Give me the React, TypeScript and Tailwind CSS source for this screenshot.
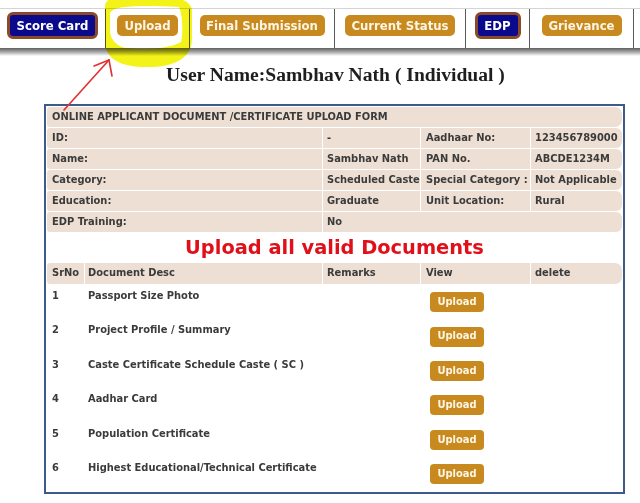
import React from "react";

const navCells = [
  { w: "w-[106px]", label: "Score Card", kind: "navy", bw: "w-[91px]" },
  { w: "w-[84px]", label: "Upload", kind: "gold", bw: "w-[61px]" },
  { w: "w-[145px]", label: "Final Submission", kind: "gold", bw: "w-[125px]" },
  { w: "w-[131px]", label: "Current Status", kind: "gold", bw: "w-[110px]" },
  { w: "w-[64px]", label: "EDP", kind: "navy", bw: "w-[46px]" },
  { w: "w-[104px]", label: "Grievance", kind: "gold", bw: "w-[80px]" },
];

const info = [
  ["ID:", "-", "Aadhaar No:", "123456789000"],
  ["Name:", "Sambhav Nath", "PAN No.", "ABCDE1234M"],
  ["Category:", "Scheduled Caste", "Special Category :", "Not Applicable"],
  ["Education:", "Graduate", "Unit Location:", "Rural"],
];

const docs = [
  "Passport Size Photo",
  "Project Profile / Summary",
  "Caste Certificate Schedule Caste ( SC )",
  "Aadhar Card",
  "Population Certificate",
  "Highest Educational/Technical Certificate",
];

function NavButton({ label, kind, bw }: { label: string; kind: string; bw: string }) {
  if (kind === "navy") {
    return (
      <div
        className={`${bw} flex h-[27px] items-center justify-center whitespace-nowrap rounded-[6px] border-[3px] border-[#8a4a2a] bg-[#0c0a8c] text-[13px] font-bold text-white`}
      >
        {label}
      </div>
    );
  }
  return (
    <div
      className={`${bw} flex h-[21px] items-center justify-center whitespace-nowrap rounded-[5px] bg-[#c88a1e] text-[13px] font-bold text-[#fdf6e6]`}
    >
      {label}
    </div>
  );
}

export default function App() {
  return (
    <div className="relative h-[503px] w-[640px] overflow-hidden bg-white font-['DejaVu_Sans_Condensed','DejaVu_Sans',sans-serif] text-[#3b3b3b]">
      <div className="h-[8px]" />

      {/* top menu */}
      <div className="flex h-[40px] border-t border-[#d4d4d4]">
        {navCells.map((c) => (
          <div
            key={c.label}
            className={`${c.w} flex items-center justify-center border-r border-[#5a5a5a] pb-[6px]`}
          >
            <NavButton label={c.label} kind={c.kind} bw={c.bw} />
          </div>
        ))}
      </div>
      <div className="h-[8px] bg-gradient-to-b from-[#5f5f5f] via-[#a8a8a8] to-white" />

      <div className="mt-[8px] pl-[31px] text-center font-['Liberation_Serif',serif] text-[19.6px] font-bold leading-[22px] text-[#1e1e1e]">
        User Name:Sambhav Nath ( Individual )
      </div>

      {/* form box */}
      <div className="ml-[44px] mt-[18px] w-[581px] border-2 border-[#3e5a8a] p-px text-[11px] font-bold">
        <div className="flex h-[20px] items-center rounded-l-[3px] rounded-r-[7px] bg-[#eddfd3] pl-[5px]">
          ONLINE APPLICANT DOCUMENT /CERTIFICATE UPLOAD FORM
        </div>

        {info.map((r) => (
          <div key={r[0]} className="mt-px grid h-[20px] grid-cols-[275px_97px_109px_91px] gap-x-px">
            <div className="flex items-center rounded-l-[3px] bg-[#eddfd3] pl-[5px]">{r[0]}</div>
            <div className="flex items-center whitespace-nowrap bg-[#eddfd3] pl-[4px]">{r[1]}</div>
            <div className="flex items-center whitespace-nowrap bg-[#eddfd3] pl-[5px]">{r[2]}</div>
            <div className="flex items-center whitespace-nowrap rounded-r-[6px] bg-[#eddfd3] pl-[4px]">{r[3]}</div>
          </div>
        ))}
        <div className="mt-px grid h-[20px] grid-cols-[275px_1fr] gap-x-px">
          <div className="flex items-center rounded-l-[3px] bg-[#eddfd3] pl-[5px]">EDP Training:</div>
          <div className="flex items-center rounded-r-[6px] bg-[#eddfd3] pl-[4px]">No</div>
        </div>

        <div className="flex h-[31px] items-center justify-center pt-px font-['DejaVu_Sans',sans-serif] text-[19.4px] font-bold text-[#e0101a]">
          Upload all valid Documents
        </div>

        <div className="grid h-[21px] grid-cols-[37px_237px_97px_109px_91px] gap-x-px">
          <div className="flex items-center rounded-l-[3px] bg-[#eddfd3] pl-[5px]">SrNo</div>
          <div className="flex items-center bg-[#eddfd3] pl-[3px]">Document Desc</div>
          <div className="flex items-center bg-[#eddfd3] pl-[4px]">Remarks</div>
          <div className="flex items-center bg-[#eddfd3] pl-[5px]">View</div>
          <div className="flex items-center rounded-r-[7px] bg-[#eddfd3] pl-[4px]">delete</div>
        </div>

        <div className="mt-px">
          {docs.map((d, i) => (
            <div key={d} className="grid h-[34.4px] grid-cols-[37px_237px_97px_109px_91px] gap-x-px">
              <div className="pl-[5px] pt-[3px]">{i + 1}</div>
              <div className="whitespace-nowrap pl-[3px] pt-[3px]">{d}</div>
              <div />
              <div className="flex items-center pl-[9px]">
                <div className="flex h-[20px] w-[54px] items-center justify-center rounded-[4px] bg-[#c88a1e] text-[11px] font-bold text-[#fdf6e6]">
                  Upload
                </div>
              </div>
              <div />
            </div>
          ))}
        </div>
      </div>

      {/* marker annotations */}
      <svg className="pointer-events-none absolute left-0 top-0" width="640" height="503" viewBox="0 0 640 503">
        <path
          className="mix-blend-multiply"
          fill="#f2f200"
          fillRule="evenodd"
          opacity="0.9"
          d="M105 6 C104 -12 190 -12 192 10 L192 38 C192 60 172 68 142 67 C116 66 104 56 105 40 Z M110 14 C111 6 135 5 179 7 C183 16 183 34 181 42 C168 49 148 50 126 48 C115 46 110 38 110 30 Z"
        />
        <g stroke="#e23030" strokeWidth="1.6" fill="none" strokeLinecap="round">
          <path d="M64 110 L109 60" />
          <path d="M109 60 L94 66" />
          <path d="M109 60 L112 76" />
        </g>
      </svg>
    </div>
  );
}
